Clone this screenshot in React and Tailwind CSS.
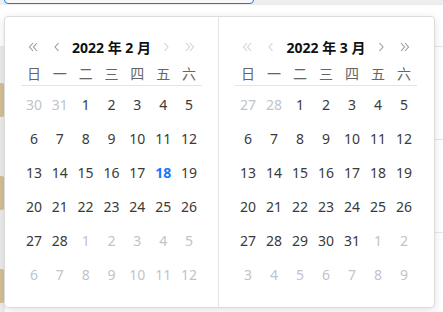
import React from "react";

const WEEK = ["日", "一", "二", "三", "四", "五", "六"];

const febDays = [
  [30, 31, 1, 2, 3, 4, 5],
  [6, 7, 8, 9, 10, 11, 12],
  [13, 14, 15, 16, 17, 18, 19],
  [20, 21, 22, 23, 24, 25, 26],
  [27, 28, 1, 2, 3, 4, 5],
  [6, 7, 8, 9, 10, 11, 12],
];

const marDays = [
  [27, 28, 1, 2, 3, 4, 5],
  [6, 7, 8, 9, 10, 11, 12],
  [13, 14, 15, 16, 17, 18, 19],
  [20, 21, 22, 23, 24, 25, 26],
  [27, 28, 29, 30, 31, 1, 2],
  [3, 4, 5, 6, 7, 8, 9],
];

// cells before `first` or after `last` belong to the neighbour months
const isOutside = (flatIdx, first, last) => flatIdx < first || flatIdx > last;

const Chevron = ({ dir = "left", double = false, color }) => (
  <svg width="12" height="12" viewBox="0 0 12 12" fill="none" stroke={color} strokeWidth="1.1">
    {dir === "left" ? (
      double ? (
        <>
          <path d="M6 2 L2.5 6 L6 10" />
          <path d="M10 2 L6.5 6 L10 10" />
        </>
      ) : (
        <path d="M7.5 2 L4 6 L7.5 10" />
      )
    ) : double ? (
      <>
        <path d="M2 2 L5.5 6 L2 10" />
        <path d="M6 2 L9.5 6 L6 10" />
      </>
    ) : (
      <path d="M4.5 2 L8 6 L4.5 10" />
    )}
  </svg>
);

const Month = ({ title, days, first, last, today, leftOn, className }) => {
  const on = "#9a9a9a";
  const off = "#d2d2d2";
  return (
    <div className={"w-[214px] px-4 pt-4 " + className}>
      <div className="flex h-7 items-center">
        <div className="flex w-12">
          <span className="flex w-6 justify-center">
            <Chevron dir="left" double color={leftOn ? on : off} />
          </span>
          <span className="flex w-6 justify-center">
            <Chevron dir="left" color={leftOn ? on : off} />
          </span>
        </div>
        <div className="flex-1 text-center text-[14px] font-bold text-[#111]">{title}</div>
        <div className="flex w-12">
          <span className="flex w-6 justify-center">
            <Chevron dir="right" color={leftOn ? off : on} />
          </span>
          <span className="flex w-6 justify-center">
            <Chevron dir="right" double color={leftOn ? off : on} />
          </span>
        </div>
      </div>
      <div className="grid h-[25px] grid-cols-7 items-center border-b border-[#e4e4e4] text-[14px] text-[#666]">
        {WEEK.map((w) => (
          <div key={w} className="text-center">
            {w}
          </div>
        ))}
      </div>
      <div className="grid grid-cols-7 pt-px">
        {days.flat().map((d, i) => {
          const out = isOutside(i, first, last);
          const isToday = !out && d === today;
          return (
            <div
              key={i}
              className={
                "flex h-[34px] items-center justify-center text-[14px] " +
                (isToday
                  ? "font-bold text-[#1677ff]"
                  : out
                  ? "text-[#c0c4cc]"
                  : "text-[#3a3a3a]")
              }
            >
              {d}
            </div>
          );
        })}
      </div>
    </div>
  );
};

const BgRow = () => (
  <div className="flex h-[93px] border-b border-[#e8e8e8]">
    <div className="flex w-[5px] flex-col justify-end bg-[#ececec] pb-[22px]">
      <div className="h-[34px] w-[5px] rounded-r bg-[#d6bf94]" />
    </div>
    <div className="flex-1 bg-white" />
  </div>
);

export default function App() {
  return (
    <div
      className="relative h-[312px] w-[443px] overflow-hidden bg-[#f2f2f2]"
      style={{ fontFamily: '"Noto Sans", "Noto Sans CJK SC", sans-serif' }}
    >
      {/* page behind the popup */}
      <div className="h-[15px] bg-gradient-to-b from-[#f5f5f5] to-[#ececec] pl-[4px]">
        <div className="-mt-[10px] h-[14px] w-[250px] rounded-sm border border-[#1677ff] bg-[#f7f7f7]" />
      </div>
      <div className="flex flex-col">
        <div className="h-[42px] border-b border-[#e8e8e8] bg-white" />
        <BgRow />
        <BgRow />
        <BgRow />
      </div>

      {/* date range popup */}
      <div className="absolute left-[4px] top-[16px] flex h-[292px] w-[431px] rounded-sm border border-[#dcdcdc] bg-white shadow-[0_2px_8px_rgba(0,0,0,0.12)]">
        <Month
          title="2022 年 2 月"
          days={febDays}
          first={2}
          last={29}
          today={18}
          leftOn
          className="border-r border-[#e4e4e4]"
        />
        <Month title="2022 年 3 月" days={marDays} first={2} last={32} today={null} leftOn={false} />
      </div>
    </div>
  );
}
